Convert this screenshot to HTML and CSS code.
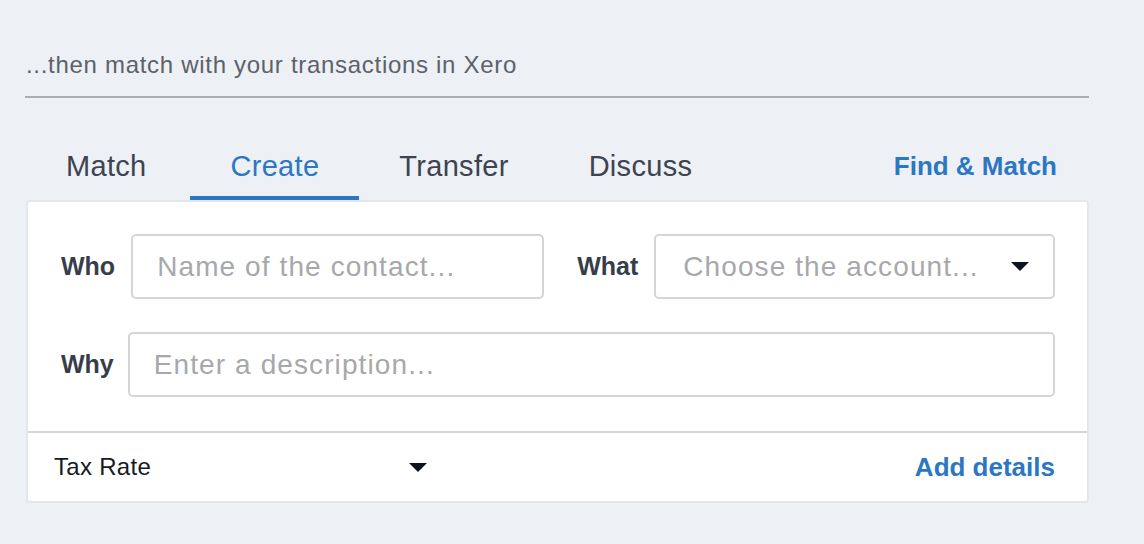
FILE: index.html
```html
<!DOCTYPE html>
<html lang="en">

<head>
    <meta charset="UTF-8">
    <meta name="viewport" content="width=device-width, initial-scale=1.0">
    <title>Match with your transactions in Xero</title>
    <link rel="stylesheet" href="styles.css">
</head>

<body>

    <div class="panel">
        <p class="intro">...then match with your transactions in Xero</p>

        <nav class="tabs">
            <a class="tab" href="#">Match</a>
            <a class="tab active" href="#">Create</a>
            <a class="tab" href="#">Transfer</a>
            <a class="tab" href="#">Discuss</a>
            <a class="find" href="#">Find &amp; Match</a>
        </nav>

        <div class="card">
            <div class="card-body">
                <div class="row two">
                    <label class="field">
                        <span class="field-label">Who</span>
                        <input type="text" class="box" placeholder="Name of the contact...">
                    </label>
                    <div class="field">
                        <span class="field-label">What</span>
                        <div class="box select">
                            <span class="placeholder">Choose the account...</span>
                            <svg class="caret" width="18" height="9" viewBox="0 0 18 9"><path d="M0 0h18L9 9z"/></svg>
                        </div>
                    </div>
                </div>
                <div class="row">
                    <label class="field">
                        <span class="field-label">Why</span>
                        <input type="text" class="box" placeholder="Enter a description...">
                    </label>
                </div>
            </div>

            <div class="card-foot">
                <div class="tax">
                    <span>Tax Rate</span>
                    <svg class="caret" width="18" height="9" viewBox="0 0 18 9"><path d="M0 0h18L9 9z"/></svg>
                </div>
                <a class="add" href="#">Add details</a>
            </div>
        </div>
    </div>

</body>

</html>
```

FILE: styles.css
```css
/* Basic Reset */
* {
    margin: 0;
    padding: 0;
    box-sizing: border-box;
}

body {
    font-family: 'Liberation Sans', Arial, sans-serif;
    background-color: #edf1f5;
    color: #3b4150;
}

a {
    text-decoration: none;
}

.panel {
    width: 1064px;
    margin-left: 25px;
}

/* Intro line */
.intro {
    padding: 50px 0 16px 1px;
    font-size: 24px;
    line-height: 30px;
    letter-spacing: 0.7px;
    color: #5c616a;
    border-bottom: 2px solid #aaadb2;
}

/* Tabs */
.tabs {
    display: flex;
    margin-top: 46px;
    padding-left: 1px;
}

.tab,
.find {
    display: block;
    font-size: 29px;
    line-height: 44px;
    letter-spacing: 0.3px;
    padding: 0 40px 8px;
    border-bottom: 4px solid transparent;
    color: #3d4350;
}

.tab:first-child {
    padding-right: 44px;
}

.tab.active {
    color: #2c77c3;
    border-bottom-color: #2c77c3;
}

.find {
    margin-left: auto;
    margin-right: 32px;
    padding: 0 0 8px;
    font-size: 26px;
    font-weight: bold;
    letter-spacing: 0;
    color: #2c77c3;
}

/* Card */
.card {
    margin-left: 1px;
    background-color: #fff;
    border: 2px solid #e3e6ea;
    border-radius: 4px;
}

.card-body {
    display: flex;
    flex-direction: column;
    gap: 33px;
    padding: 32px 32px 34px 33px;
}

.row {
    display: flex;
}

.row.two {
    display: grid;
    grid-template-columns: 1fr 1fr;
    column-gap: 33px;
}

.field {
    display: flex;
    align-items: center;
    gap: 16px;
    flex: 1;
}

.row:not(.two) .field {
    gap: 14px;
}

.field-label {
    font-size: 25px;
    font-weight: bold;
    color: #363d4b;
}

.box {
    flex: 1;
    min-width: 0;
    height: 65px;
    border: 2px solid #d3d5d9;
    border-radius: 5px;
    background-color: #fff;
    padding: 0 24px;
    font-family: inherit;
    font-size: 28px;
    letter-spacing: 1.1px;
    color: #222;
    outline: none;
}

.box::placeholder,
.placeholder {
    color: #a7a8ac;
}

.select {
    display: flex;
    align-items: center;
    justify-content: space-between;
    padding: 0 24px 0 27px;
}

.caret {
    display: block;
    fill: #0e1320;
}

/* Footer */
.card-foot {
    display: flex;
    align-items: center;
    justify-content: space-between;
    height: 70px;
    padding: 0 32px 0 26px;
    border-top: 2px solid #d4d6da;
}

.tax {
    display: flex;
    align-items: center;
    justify-content: space-between;
    width: 373px;
    font-size: 24px;
    letter-spacing: 0.3px;
    color: #151a24;
}

.add {
    font-size: 26px;
    font-weight: bold;
    color: #2c77c3;
}
```
